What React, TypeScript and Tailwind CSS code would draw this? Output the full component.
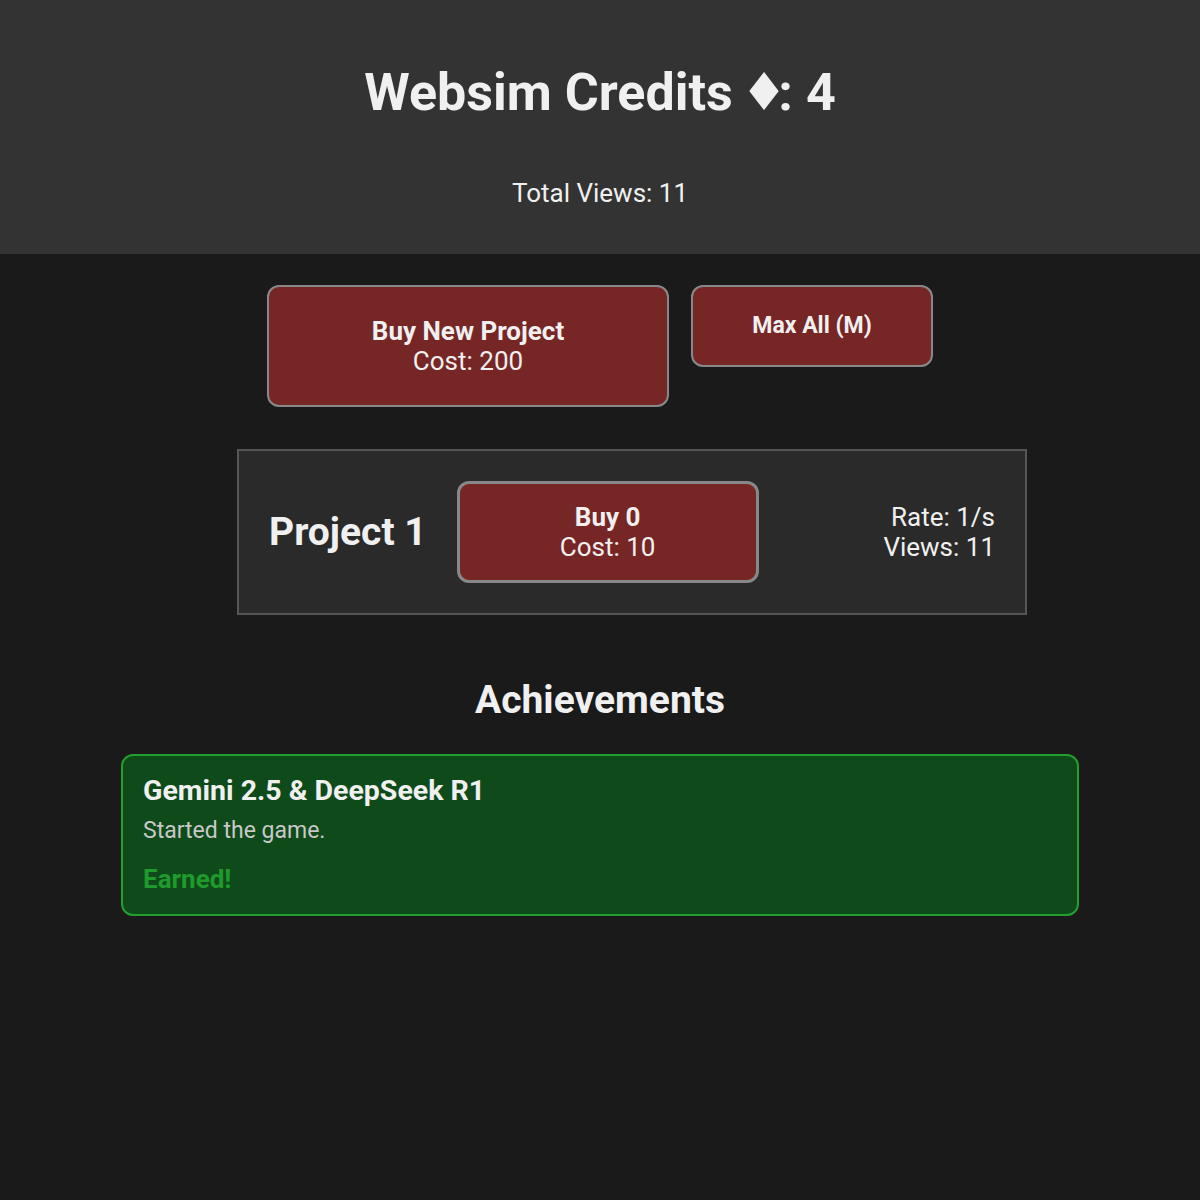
export default function App() {
  return (
    <div className="min-h-[1200px] bg-[#1a1a1a] text-[#f0f0f0]" style={{ fontFamily: 'Roboto, "Liberation Sans", sans-serif' }}>
      <div className="bg-[#333333] h-[254px] flex flex-col items-center pt-[60px]">
        <h1 className="text-[52px] font-bold leading-[64px]">
          Websim Credits<span className="tracking-[-5px]"> </span><span className="tracking-[-9px]" style={{ fontFamily: '"DejaVu Sans", sans-serif' }}>♦</span>: 4
        </h1>
        <div className="text-[26px] leading-[32px] mt-[52px]">Total Views: 11</div>
      </div>
      <div className="flex justify-center items-start gap-[22px] mt-[31px]">
        <button className="w-[402px] h-[122px] bg-[#772626] border-2 border-[#888] rounded-[12px] flex flex-col items-center justify-center text-[26px] leading-[30px] text-[#f0f0f0]">
          <span className="font-bold">Buy New Project</span>
          <span>Cost: 200</span>
        </button>
        <button className="w-[242px] h-[82px] bg-[#772626] border-2 border-[#888] rounded-[12px] flex items-center justify-center text-[23px] font-bold text-[#f0f0f0]">
          Max All (M)
        </button>
      </div>
      <div className="flex justify-center mt-[42px]">
        <div className="w-[790px] h-[166px] ml-[64px] bg-[#2a2a2a] border-2 border-[#555] flex items-center px-[30px]">
          <div className="text-[39px] font-bold">Project 1</div>
          <button className="ml-[30px] w-[302px] h-[102px] bg-[#772626] border-[3px] border-[#888] rounded-[12px] flex flex-col items-center justify-center text-[26px] leading-[30px] text-[#f0f0f0]">
            <span className="font-bold">Buy 0</span>
            <span>Cost: 10</span>
          </button>
          <div className="ml-auto text-right text-[26px] leading-[30px]">
            <div>Rate: 1/s</div>
            <div>Views: 11</div>
          </div>
        </div>
      </div>
      <h2 className="text-center text-[39px] font-bold mt-[62px] leading-[46px]">Achievements</h2>
      <div className="flex justify-center mt-[31px]">
        <div className="w-[958px] h-[162px] bg-[#0f4a1a] border-2 border-[#22a02f] rounded-[12px] px-[20px] pt-[16px]">
          <div className="text-[28.5px] font-bold leading-[38px]">Gemini 2.5 &amp; DeepSeek R1</div>
          <div className="text-[23px] text-[#c8c8c8] leading-[32px] mt-[5px]">Started the game.</div>
          <div className="text-[26px] font-bold text-[#1f9a2c] mt-[17px] leading-[30px]">Earned!</div>
        </div>
      </div>
    </div>
  );
}
